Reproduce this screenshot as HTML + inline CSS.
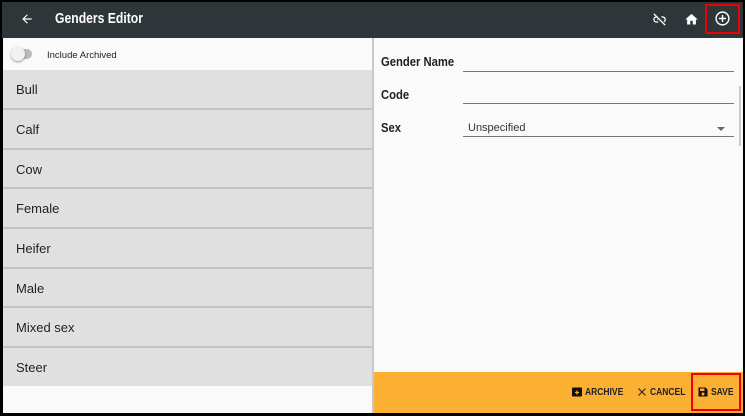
<!DOCTYPE html>
<html><head><style>
*{margin:0;padding:0;box-sizing:border-box}
body{width:745px;height:416px;background:#000;font-family:"Liberation Sans",sans-serif;position:relative;overflow:hidden}
.hdr{position:absolute;left:2px;top:2px;width:741px;height:36px;background:#2f363a;color:#fff}
.hdr .t{position:absolute;left:53px;top:9px;font-size:14.5px;font-weight:bold;transform:scaleX(0.84);transform-origin:left}
.left{position:absolute;left:3px;top:38px;width:369px;height:375px;background:#fafafa}
.item{position:absolute;left:0;width:369px;height:38px;background:#e0e0e0;font-size:13px;color:#222;padding:12px 0 0 13px}
.sep{position:absolute;left:0;width:369px;height:2px;background:#c4c4c4}
.div{position:absolute;left:372px;top:38px;width:2px;height:375px;background:#c8c8c8}
.right{position:absolute;left:374px;top:38px;width:369px;height:334px;background:#fafafa}
.lbl{position:absolute;left:7px;font-size:12.5px;font-weight:bold;color:#222;transform:scaleX(0.9);transform-origin:left}
.line{position:absolute;left:89px;width:271px;height:1px;background:#777}
.foot{position:absolute;left:374px;top:372px;width:369px;height:41px;background:#fbb034}
.btn{position:absolute;top:14px;font-size:10px;font-weight:bold;color:#222;display:flex;align-items:center;gap:2px}
.btn span{display:inline-block;transform:scaleX(0.85);transform-origin:left}
</style></head><body>
<div class="hdr">
<svg style="position:absolute;left:18px;top:10px" width="14" height="14" viewBox="0 0 24 24"><path d="M20 11H7.8l5.6-5.6L12 4l-8 8 8 8 1.4-1.4L7.8 13H20z" fill="#fff"/></svg>
<div class="t">Genders Editor</div>
<svg style="position:absolute;left:650px;top:10px" width="15" height="15" viewBox="0 0 24 24" fill="none" stroke="#fff" stroke-width="2"><path d="M9 8H7a4 4 0 000 8h3M15 8h2a4 4 0 012 7.5M8 12h1M3 3l18 18"/></svg>
<div style="position:absolute;left:682px;top:10px"><svg width="15" height="15" viewBox="0 0 24 24"><path d="M10 20v-6h4v6h5v-8h3L12 3 2 12h3v8z" fill="#fff"/></svg></div>
<div style="position:absolute;left:703px;top:2px;width:35px;height:30px;border:2px solid #e00"></div>
<svg style="position:absolute;left:712px;top:8px" width="17" height="17" viewBox="0 0 24 24" fill="none" stroke="#fff" stroke-width="2"><circle cx="12" cy="12" r="9"/><path d="M12 7v10M7 12h10"/></svg>
</div>
<div class="left">
<div style="position:absolute;left:9px;top:11px;width:20px;height:10px;border-radius:5px;background:#bbb"></div>
<div style="position:absolute;left:8px;top:9px;width:14px;height:14px;border-radius:7px;background:#f1f1f1;box-shadow:0 1px 2px rgba(0,0,0,.4)"></div>
<div style="position:absolute;left:44px;top:12px;font-size:9.5px;color:#222">Include Archived</div>
<div class="item" style="top:32px">Bull</div>
<div class="sep" style="top:70px"></div>
<div class="item" style="top:72px">Calf</div>
<div class="sep" style="top:110px"></div>
<div class="item" style="top:112px">Cow</div>
<div class="sep" style="top:149px"></div>
<div class="item" style="top:151px">Female</div>
<div class="sep" style="top:189px"></div>
<div class="item" style="top:191px">Heifer</div>
<div class="sep" style="top:229px"></div>
<div class="item" style="top:231px">Male</div>
<div class="sep" style="top:268px"></div>
<div class="item" style="top:270px">Mixed sex</div>
<div class="sep" style="top:308px"></div>
<div class="item" style="top:310px">Steer</div>
</div>
<div class="div"></div>
<div class="right">
<div class="lbl" style="top:17px">Gender Name</div><div class="line" style="top:33px"></div>
<div class="lbl" style="top:50px">Code</div><div class="line" style="top:65px"></div>
<div class="lbl" style="top:83px">Sex</div>
<div style="position:absolute;left:94px;top:84px;font-size:11px;color:#333">Unspecified</div>
<div style="position:absolute;left:343px;top:89px;border-left:4px solid transparent;border-right:4px solid transparent;border-top:4px solid #666"></div>
<div class="line" style="top:98px"></div>
<div style="position:absolute;left:365px;top:48px;width:2px;height:60px;background:#ccc"></div>
</div>
<div class="foot">
<div class="btn" style="left:197px"><svg width="12" height="12" viewBox="0 0 24 24"><rect x="2" y="3" width="20" height="18" rx="2" fill="#111"/><path d="M12 9v8M8 13h8" stroke="#fbb034" stroke-width="2.5"/></svg><span>ARCHIVE</span></div>
<div class="btn" style="left:262px"><svg width="12" height="12" viewBox="0 0 24 24"><path d="M5 5l14 14M19 5L5 19" stroke="#222" stroke-width="2.2"/></svg><span>CANCEL</span></div>
<div style="position:absolute;left:317px;top:1px;width:50px;height:38px;border:2px solid #e00"></div>
<div class="btn" style="left:323px"><svg width="12" height="12" viewBox="0 0 24 24"><path d="M3 3h14l4 4v14H3z" fill="#111"/><rect x="6" y="5" width="9" height="5" fill="#fbb034"/><circle cx="12" cy="16" r="3" fill="#fbb034"/></svg><span>SAVE</span></div>
</div>
</body></html>
